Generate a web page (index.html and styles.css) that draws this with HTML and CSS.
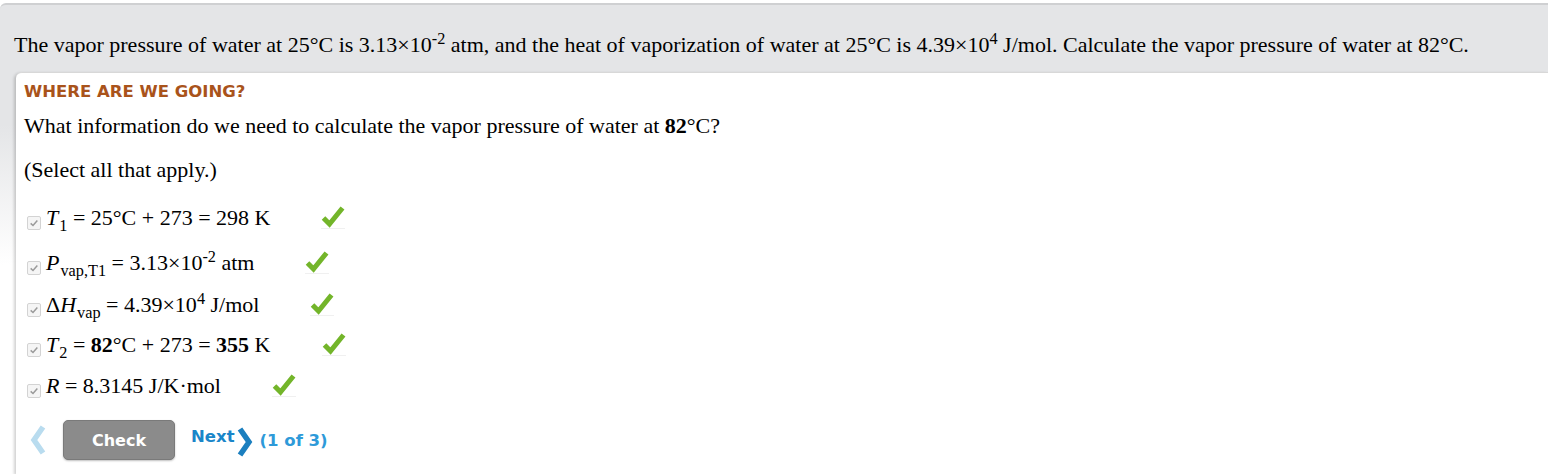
FILE: index.html
```html
<!DOCTYPE html>
<html>
<head>
<meta charset="utf-8">
<link rel="stylesheet" href="styles.css">
</head>
<body>
<div class="problem">
  <p class="question">The vapor pressure of water at 25°C is 3.13×10<sup>-2</sup> atm, and the heat of vaporization of water at 25°C is 4.39×10<sup>4</sup> J/mol. Calculate the vapor pressure of water at 82°C.</p>
  <div class="panel">
    <div class="heading">WHERE ARE WE GOING?</div>
    <p class="prompt first">What information do we need to calculate the vapor pressure of water at <b>82</b>°C?</p>
    <p class="prompt">(Select all that apply.)</p>
    <ul class="choices">
      <li class="choice"><span class="box"><svg viewBox="0 0 12 12" width="10" height="10"><path d="M2 6.5 L4.8 9 L10 3" fill="none" stroke="#9a9a9a" stroke-width="1.8"/></svg></span><span class="expr"><i>T</i><sub>1</sub> = 25°C + 273 = 298 K</span><span class="ok"><svg viewBox="0 0 24 23" width="24" height="23"><path d="M2.5 13 L8.5 19 L21.5 3" fill="none" stroke="#73b52a" stroke-width="5"/></svg></span></li>
      <li class="choice"><span class="box"><svg viewBox="0 0 12 12" width="10" height="10"><path d="M2 6.5 L4.8 9 L10 3" fill="none" stroke="#9a9a9a" stroke-width="1.8"/></svg></span><span class="expr"><i>P</i><sub>vap,T1</sub> = 3.13×10<sup>-2</sup> atm</span><span class="ok"><svg viewBox="0 0 24 23" width="24" height="23"><path d="M2.5 13 L8.5 19 L21.5 3" fill="none" stroke="#73b52a" stroke-width="5"/></svg></span></li>
      <li class="choice"><span class="box"><svg viewBox="0 0 12 12" width="10" height="10"><path d="M2 6.5 L4.8 9 L10 3" fill="none" stroke="#9a9a9a" stroke-width="1.8"/></svg></span><span class="expr">Δ<i>H</i><sub>vap</sub> = 4.39×10<sup>4</sup> J/mol</span><span class="ok"><svg viewBox="0 0 24 23" width="24" height="23"><path d="M2.5 13 L8.5 19 L21.5 3" fill="none" stroke="#73b52a" stroke-width="5"/></svg></span></li>
      <li class="choice"><span class="box"><svg viewBox="0 0 12 12" width="10" height="10"><path d="M2 6.5 L4.8 9 L10 3" fill="none" stroke="#9a9a9a" stroke-width="1.8"/></svg></span><span class="expr"><i>T</i><sub>2</sub> = <b>82</b>°C + 273 = <b>355</b> K</span><span class="ok"><svg viewBox="0 0 24 23" width="24" height="23"><path d="M2.5 13 L8.5 19 L21.5 3" fill="none" stroke="#73b52a" stroke-width="5"/></svg></span></li>
      <li class="choice"><span class="box"><svg viewBox="0 0 12 12" width="10" height="10"><path d="M2 6.5 L4.8 9 L10 3" fill="none" stroke="#9a9a9a" stroke-width="1.8"/></svg></span><span class="expr"><i>R</i> = 8.3145 J/K·mol</span><span class="ok"><svg viewBox="0 0 24 23" width="24" height="23"><path d="M2.5 13 L8.5 19 L21.5 3" fill="none" stroke="#73b52a" stroke-width="5"/></svg></span></li>
    </ul>
    <div class="nav">
      <span class="prev"><svg viewBox="0 0 16 30" width="16" height="30"><path d="M13 2 L4 15 L13 28" fill="none" stroke="#b9dcef" stroke-width="5.5"/></svg></span>
      <button class="check">Check</button>
      <span class="next">Next</span>
      <span class="next-arrow"><svg viewBox="0 0 16 30" width="16" height="30"><path d="M3 2 L12 15 L3 28" fill="none" stroke="#1b7fbf" stroke-width="5.5"/></svg></span>
      <span class="count">(1 of 3)</span>
    </div>
  </div>
</div>
</body>
</html>
```

FILE: styles.css
```css
html, body {
  margin: 0;
  padding: 0;
  background: #ffffff;
}
body {
  font-family: "Liberation Serif", "Times New Roman", serif;
  color: #000;
  height: 474px;
  overflow: hidden;
}
.problem {
  margin-top: 3px;
  background: linear-gradient(#e4e5e7 0, #e4e5e7 120px, #ffffff 260px);
  border-top: 2px solid #cfd0d2;
  border-radius: 6px 0 0 0;
  height: 469px;
}
.question {
  margin: 0;
  padding: 27px 0 0 14px;
  font-size: 22px;
  line-height: 26px;
  box-sizing: border-box;
  height: 67px;
  white-space: nowrap;
}
sup, sub {
  font-size: 74%;
  line-height: 0;
}
sup { vertical-align: 0.48em; }
sub { vertical-align: -0.36em; margin-left: 1px; }
.panel {
  margin-left: 16px;
  background: #fff;
  border-top: 1px solid #d8d8d8;
  border-radius: 6px 0 0 0;
  box-shadow: -2px 1px 3px rgba(0,0,0,0.18);
  height: 402px;
  padding: 9px 0 0 8px;
  box-sizing: border-box;
}
.heading {
  font-family: "DejaVu Sans", Verdana, sans-serif;
  font-weight: bold;
  font-size: 16.5px;
  color: #a9531b;
  line-height: 20px;
}
.prompt {
  margin: 0;
  font-size: 22px;
  line-height: 44px;
}
.prompt.first { margin-top: 2px; }
.choices {
  list-style: none;
  margin: 5px 0 0 0;
  padding: 0;
}
.choice {
  font-size: 22px;
  line-height: 42px;
  white-space: nowrap;
}
.choice:nth-child(2) { margin-top: 3px; }
.choice:nth-child(4) { margin-top: -2px; }
.choice:nth-child(5) { margin-top: -1px; }
.box {
  display: inline-flex;
  align-items: center;
  justify-content: center;
  width: 12px;
  height: 12px;
  border: 1px solid #d3d3d3;
  border-radius: 2px;
  background: #f5f5f5;
  margin: 0 5px 0 3px;
  vertical-align: -3px;
}
.ok {
  display: inline-block;
  margin-left: 51px;
  line-height: 0;
  vertical-align: -3px;
  border-bottom: 1px solid #f0f0f0;
}
.nav {
  display: flex;
  align-items: center;
  margin-top: 13px;
  font-family: "DejaVu Sans", Verdana, sans-serif;
  font-weight: bold;
}
.prev { margin: 0 17px 0 6px; line-height: 0; }
.check {
  width: 112px;
  height: 40px;
  background: #8b8b8b;
  border: 1px solid #7a7a7a;
  border-radius: 5px;
  color: #fff;
  font-family: "DejaVu Sans", Verdana, sans-serif;
  font-weight: bold;
  font-size: 16px;
  box-shadow: 0 1px 2px rgba(0,0,0,0.25);
  padding: 0;
  margin-right: 16px;
}
.next {
  color: #1a86c9;
  font-size: 16.5px;
  margin-top: -7px;
}
.next-arrow { line-height: 0; margin: 4px 7px 0 2px; }
.count {
  color: #2e9ad9;
  font-size: 16.5px;
  margin-top: 0;
}
```
